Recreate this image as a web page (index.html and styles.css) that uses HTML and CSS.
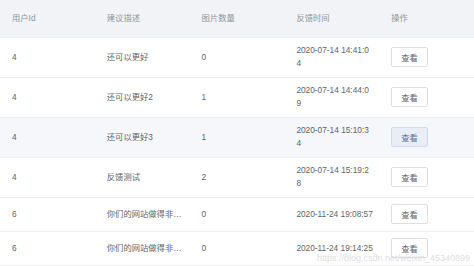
FILE: index.html
```html
<!DOCTYPE html>
<html lang="zh-CN">
<head>
<meta charset="utf-8">
<title>反馈列表</title>
<link rel="stylesheet" href="styles.css">
</head>
<body>
<div class="table-wrap">
  <table class="data-table">
    <colgroup>
      <col><col><col><col><col>
    </colgroup>
    <thead>
      <tr>
        <th><div class="cell">用户Id</div></th>
        <th><div class="cell">建议描述</div></th>
        <th><div class="cell">图片数量</div></th>
        <th><div class="cell">反馈时间</div></th>
        <th><div class="cell">操作</div></th>
      </tr>
    </thead>
    <tbody>
      <tr>
        <td><div class="cell">4</div></td>
        <td><div class="cell ellipsis">还可以更好</div></td>
        <td><div class="cell">0</div></td>
        <td><div class="cell">2020-07-14 14:41:0<br>4</div></td>
        <td><div class="cell action"><button class="btn">查看</button></div></td>
      </tr>
      <tr>
        <td><div class="cell">4</div></td>
        <td><div class="cell ellipsis">还可以更好2</div></td>
        <td><div class="cell">1</div></td>
        <td><div class="cell">2020-07-14 14:44:0<br>9</div></td>
        <td><div class="cell action"><button class="btn">查看</button></div></td>
      </tr>
      <tr class="hover">
        <td><div class="cell">4</div></td>
        <td><div class="cell ellipsis">还可以更好3</div></td>
        <td><div class="cell">1</div></td>
        <td><div class="cell">2020-07-14 15:10:3<br>4</div></td>
        <td><div class="cell action"><button class="btn btn-hover">查看</button></div></td>
      </tr>
      <tr>
        <td><div class="cell">4</div></td>
        <td><div class="cell ellipsis">反馈测试</div></td>
        <td><div class="cell">2</div></td>
        <td><div class="cell">2020-07-14 15:19:2<br>8</div></td>
        <td><div class="cell action"><button class="btn">查看</button></div></td>
      </tr>
      <tr>
        <td><div class="cell">6</div></td>
        <td><div class="cell ellipsis">你们的网站做得非常好</div></td>
        <td><div class="cell">0</div></td>
        <td><div class="cell">2020-11-24 19:08:57</div></td>
        <td><div class="cell action"><button class="btn">查看</button></div></td>
      </tr>
      <tr>
        <td><div class="cell">6</div></td>
        <td><div class="cell ellipsis">你们的网站做得非常好</div></td>
        <td><div class="cell">0</div></td>
        <td><div class="cell">2020-11-24 19:14:25</div></td>
        <td><div class="cell action"><button class="btn">查看</button></div></td>
      </tr>
    </tbody>
  </table>
  <div class="watermark">https://blog.csdn.net/weixin_45340899</div>
</div>
</body>
</html>
```

FILE: styles.css
```css
html, body {
  margin: 0;
  padding: 0;
  background: #ffffff;
}

body {
  font-family: "Liberation Sans", "Noto Sans CJK SC", sans-serif;
  font-size: 8.3px;
  color: #606266;
}

.table-wrap {
  position: relative;
  width: 474px;
}

.data-table {
  width: 474px;
  table-layout: fixed;
  border-collapse: collapse;
  border-spacing: 0;
}

.data-table th,
.data-table td {
  padding: 0;
  text-align: left;
  border-bottom: 1px solid #ebeef5;
  vertical-align: middle;
}

.data-table th {
  background: #f1f3f6;
  color: #909399;
  font-weight: normal;
  padding: 12px 0 11.5px;
}

.data-table td {
  padding: 6.5px 0;
}

.cell {
  padding: 0 6px 0 12px;
  line-height: 13px;
  white-space: nowrap;
}

.ellipsis {
  overflow: hidden;
  text-overflow: ellipsis;
}

.action {
  display: flex;
  align-items: center;
}

.hover td {
  background: #f5f7fa;
}

.btn {
  height: 20px;
  padding: 0 9px;
  border: 1px solid #dcdfe6;
  border-radius: 2px;
  background: #ffffff;
  color: #606266;
  font-family: "Noto Sans CJK SC", sans-serif;
  font-size: 8.3px;
  line-height: 18px;
  cursor: pointer;
}

.btn-hover {
  background: #e9edf6;
  border-color: #d3dbea;
  color: #5b6f9c;
}

.watermark {
  position: absolute;
  right: 4px;
  bottom: 3px;
  font-size: 9px;
  color: rgba(205, 205, 205, 0.7);
  pointer-events: none;
}
```
